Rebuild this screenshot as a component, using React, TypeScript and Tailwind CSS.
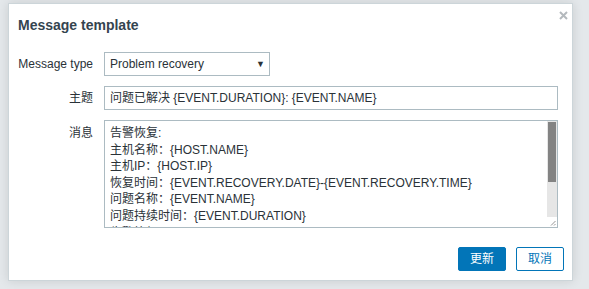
import React from 'react';

const lines = [
  '告警恢复:',
  '主机名称：{HOST.NAME}',
  '主机IP：{HOST.IP}',
  '恢复时间：{EVENT.RECOVERY.DATE}-{EVENT.RECOVERY.TIME}',
  '问题名称：{EVENT.NAME}',
  '问题持续时间：{EVENT.DURATION}',
  '告警等级：{EVENT.SEVERITY}',
];

export default function App() {
  return (
    <div
      className="w-[589px] h-[289px] bg-[#e4e8eb] pt-[3px] pl-[8px] overflow-hidden text-[12px] text-[#2a3238]"
      style={{ fontFamily: '"Liberation Sans", Arial, "Noto Sans CJK SC", sans-serif' }}
    >
      <div className="relative w-[565px] h-[278px] bg-white border border-[#ccd5d9] shadow-[0_0_10px_rgba(0,0,0,0.12)] flex flex-col">
        {/* close */}
        <button className="absolute right-[3px] top-[5px] w-[12px] h-[12px] flex items-center justify-center">
          <svg width="9" height="9" viewBox="0 0 9 9">
            <path d="M1 1 L8 8 M8 1 L1 8" stroke="#b4b9bd" strokeWidth="2" />
          </svg>
        </button>

        <h4 className="pl-[9px] pt-[11px] h-[31px] text-[14px] leading-[20px] font-bold text-[#34444f]">
          Message template
        </h4>

        <div className="flex flex-col gap-[10px] mt-[17px]">
          <div className="flex items-center gap-[11px]">
            <label className="w-[84px] text-right">Message type</label>
            <div className="w-[166px] h-[24px] border border-[#acbbc2] flex items-center justify-between pl-[5px] pr-[4px]">
              <span>Problem recovery</span>
              <span className="text-[9px] leading-none">▼</span>
            </div>
          </div>

          <div className="flex items-center gap-[11px]">
            <label className="w-[84px] text-right">主题</label>
            <div className="w-[454px] h-[24px] border border-[#acbbc2] flex items-center pl-[5px]">
              问题已解决 {'{EVENT.DURATION}'}: {'{EVENT.NAME}'}
            </div>
          </div>

          <div className="flex items-start gap-[11px]">
            <label className="w-[84px] text-right leading-[16.6px] pt-[5px]">消息</label>
            <div className="relative w-[454px] h-[108px] border border-[#acbbc2] flex overflow-hidden">
              <div className="flex-1 pl-[5px] pt-[4px] leading-[16.6px] whitespace-nowrap overflow-hidden">
                {lines.map((l) => (
                  <div key={l}>{l}</div>
                ))}
              </div>
              <div className="w-[10px] h-full bg-[#e6e6e6] flex flex-col">
                <div className="h-[60px] bg-[#838383] mt-[1px] mx-[1px]" />
              </div>
              <div className="absolute right-0 bottom-0 w-[10px] h-[10px] bg-white">
                <svg width="10" height="10" viewBox="0 0 10 10">
                  <path d="M8.5 4 L4 8.5 M8.5 7 L7 8.5" stroke="#7a7a7a" strokeWidth="0.8" />
                </svg>
              </div>
            </div>
          </div>
        </div>

        <div className="flex justify-end gap-[10px] mt-auto mb-[9px] mr-[8px]">
          <button className="w-[48px] h-[24px] rounded-[2px] bg-[#0275b8] border border-[#0275b8] text-white text-[12px]">
            更新
          </button>
          <button className="w-[48px] h-[24px] rounded-[2px] bg-white border border-[#0275b8] text-[#0275b8] text-[12px]">
            取消
          </button>
        </div>
      </div>
    </div>
  );
}
